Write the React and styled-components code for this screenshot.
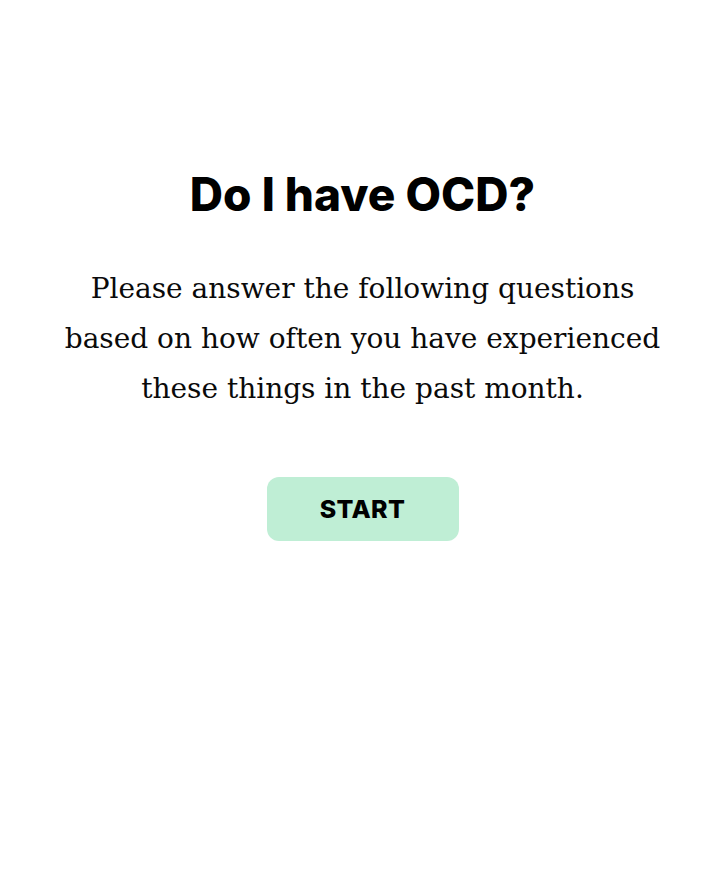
import styled, { createGlobalStyle } from 'styled-components';

const GlobalStyle = createGlobalStyle`
  html, body {
    margin: 0;
    padding: 0;
    background: #ffffff;
  }
`;

const Page = styled.main`
  display: flex;
  flex-direction: column;
  align-items: center;
  padding: 166px 40px 0;
  min-height: 870px;
  box-sizing: border-box;
`;

const Title = styled.h1`
  margin: 0;
  font-family: Inter, 'Noto Sans', sans-serif;
  font-weight: 800;
  font-size: 46px;
  line-height: 56px;
  letter-spacing: 0;
  color: #000;
`;

const Intro = styled.p`
  margin: 42px 0 0;
  max-width: 620px;
  font-family: 'DejaVu Serif', 'Liberation Serif', serif;
  font-size: 28px;
  line-height: 50px;
  text-align: center;
  color: #0a0a0a;
`;

const StartButton = styled.button`
  margin-top: 63px;
  width: 192px;
  height: 64px;
  border: none;
  border-radius: 12px;
  background: #bfeed5;
  font-family: Inter, 'Noto Sans', sans-serif;
  font-weight: 800;
  font-size: 25px;
  letter-spacing: 0.3px;
  color: #000;
  cursor: pointer;
`;

export default function App() {
  return (
    <>
      <GlobalStyle />
      <Page>
        <Title>Do I have OCD?</Title>
        <Intro>
          Please answer the following questions based on how often you have experienced these
          things in the past month.
        </Intro>
        <StartButton>START</StartButton>
      </Page>
    </>
  );
}
